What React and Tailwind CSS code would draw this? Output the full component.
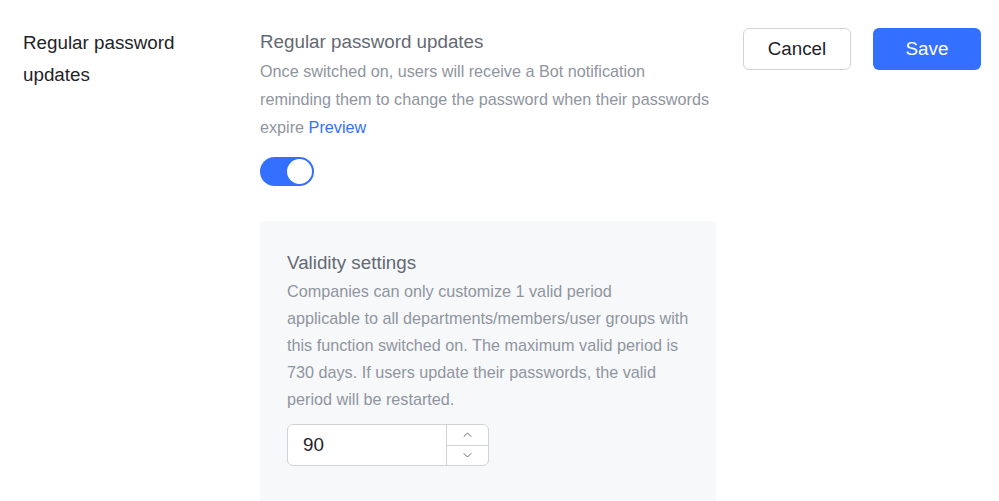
import { useState } from 'react';

const font = { fontFamily: '"Liberation Sans", Arial, sans-serif' };

// ── Small chevron for the number spinner ─────────────
const Chevron = ({ up }) => (
  <svg width="9" height="6" viewBox="0 0 9 6" fill="none">
    <path
      d={up ? 'M1 4.5L4.5 1L8 4.5' : 'M1 1.5L4.5 5L8 1.5'}
      stroke="#646a73"
      strokeWidth="1"
      strokeLinecap="round"
      strokeLinejoin="round"
    />
  </svg>
);

const App = () => {
  const [enabled, setEnabled] = useState(true);
  const [days, setDays] = useState(90);

  return (
    <div className="w-[999px] h-[501px] bg-white overflow-hidden flex" style={font}>

      {/* ── Left label ─────────────────────────────────── */}
      <div className="w-[260px] pl-[23px] pt-[27px] shrink-0">
        <p className="text-[18.8px] leading-[32px] text-[#1f2329] w-[180px]">
          Regular password updates
        </p>
      </div>

      {/* ── Main column ────────────────────────────────── */}
      <div className="w-[456px] shrink-0 pt-[28px] flex flex-col">
        <h3 className="text-[18.8px] leading-[28px] text-[#646a73]">Regular password updates</h3>
        <p className="text-[16.2px] leading-[28px] text-[#8f959e] mt-[1px]">
          Once switched on, users will receive a Bot notification reminding them to change the
          password when their passwords expire{' '}
          <a className="inline-block leading-[20px] text-[#3370ff] cursor-pointer">Preview</a>
        </p>

        <button
          onClick={() => setEnabled(!enabled)}
          className={`mt-[16px] w-[54px] h-[29px] rounded-full p-[2px] flex items-center
                      ${enabled ? 'bg-[#3370ff] justify-end' : 'bg-[#bbbfc4] justify-start'}`}
        >
          <span className="w-[25px] h-[25px] rounded-full bg-white block" />
        </button>

        {/* Validity settings */}
        <div className="mt-[35px] flex-1 bg-[#f7f8fa] pl-[27px] pr-[20px] pt-[28px]">
          <h4 className="text-[18.8px] leading-[28px] text-[#646a73]">Validity settings</h4>
          <p className="text-[16.2px] leading-[27px] text-[#8f959e] mt-[1px] w-[405px]">
            Companies can only customize 1 valid period<br />
            applicable to all departments/members/user groups with this function switched on.
            The maximum valid period is 730 days. If users update their passwords, the valid
            period will be restarted.
          </p>

          <div className="mt-[11px] w-[202px] h-[42px] bg-white border border-[#d0d3d6] rounded-[6px] flex overflow-hidden">
            <input
              value={days}
              onChange={(e) => setDays(e.target.value)}
              className="flex-1 min-w-0 pl-[15px] text-[18.8px] text-[#1f2329] outline-none bg-transparent"
              style={font}
            />
            <div className="w-[42px] border-l border-[#d0d3d6] flex flex-col">
              <button
                onClick={() => setDays(Number(days) + 1)}
                className="flex-1 flex items-center justify-center border-b border-[#d0d3d6]"
              >
                <Chevron up />
              </button>
              <button
                onClick={() => setDays(Math.max(1, Number(days) - 1))}
                className="flex-1 flex items-center justify-center"
              >
                <Chevron />
              </button>
            </div>
          </div>
        </div>
      </div>

      {/* ── Actions ────────────────────────────────────── */}
      <div className="flex-1 flex justify-end gap-[22px] pt-[28px] pr-[18px]">
        <button className="w-[108px] h-[42px] rounded-[6px] border border-[#d0d3d6] bg-white text-[18.8px] text-[#1f2329]">
          Cancel
        </button>
        <button className="w-[108px] h-[42px] rounded-[6px] bg-[#3370ff] text-[18.8px] text-white">
          Save
        </button>
      </div>
    </div>
  );
};

export default App;
